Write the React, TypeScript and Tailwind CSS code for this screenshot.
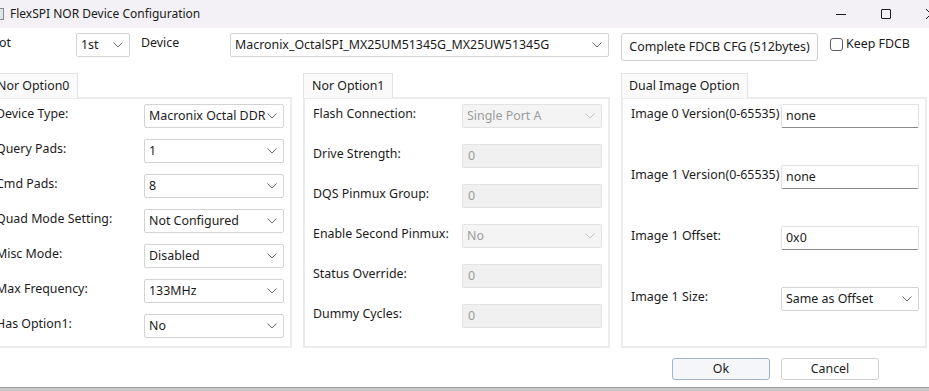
import React from "react";

const font = { fontFamily: '"Noto Sans", "Open Sans", sans-serif' };

function Chevron({ disabled }: { disabled?: boolean }) {
  return (
    <svg width="10" height="6" viewBox="0 0 10 6" className="shrink-0">
      <polyline
        points="0.5,0.5 5,5 9.5,0.5"
        fill="none"
        stroke={disabled ? "#c4c4c4" : "#6a6a6a"}
        strokeWidth="1"
      />
    </svg>
  );
}

function Combo({ value, w, disabled }: { value: string; w: string; disabled?: boolean }) {
  return (
    <div
      className={`${w} flex h-[24px] shrink-0 items-center justify-between overflow-hidden rounded-[2px] border pl-[4px] pr-[6px] ${
        disabled ? "border-[#e3e3e3] bg-[#f4f4f4] text-[#9c9c9c]" : "border-[#d3d3d3] bg-white text-[#1b1b1b]"
      }`}
    >
      <span className="min-w-0 flex-1 overflow-hidden whitespace-nowrap text-clip">{value}</span>
      <Chevron disabled={disabled} />
    </div>
  );
}

function Field({ value, disabled }: { value: string; disabled?: boolean }) {
  if (disabled) {
    return (
      <div className="flex h-[24px] w-[140px] shrink-0 items-center rounded-[2px] border border-[#e3e3e3] bg-[#f0f0f0] px-[5px] text-[#9c9c9c]">
        {value}
      </div>
    );
  }
  return (
    <div className="flex h-[24px] w-[138px] shrink-0 items-center rounded-[2px] border border-[#e2e2e2] border-b-[#8a8a8a] bg-white px-[4px] text-[#1b1b1b]">
      {value}
    </div>
  );
}

function Group({
  title,
  width,
  children,
  tabPad,
}: {
  title: string;
  width: string;
  children: React.ReactNode;
  tabPad: string;
}) {
  return (
    <div className={`${width} flex shrink-0 flex-col`}>
      <div className={`relative z-10 -mb-px flex h-[25px] items-center self-start border border-b-0 border-[#e3e3e3] bg-[#fafafa] ${tabPad} text-[#1b1b1b]`}>
        {title}
      </div>
      <div className="h-[251px] border-2 border-[#ececec] bg-white">{children}</div>
    </div>
  );
}

function Row({ label, children }: { label: string; children: React.ReactNode }) {
  return (
    <div className="flex items-start justify-between">
      <span className="mt-[1px] whitespace-nowrap">{label}</span>
      {children}
    </div>
  );
}

export default function App() {
  const opt0: [string, string][] = [
    ["Device Type:", "Macronix Octal DDR"],
    ["Query Pads:", "1"],
    ["Cmd Pads:", "8"],
    ["Quad Mode Setting:", "Not Configured"],
    ["Misc Mode:", "Disabled"],
    ["Max Frequency:", "133MHz"],
    ["Has Option1:", "No"],
  ];
  const opt1: [string, string, boolean][] = [
    ["Flash Connection:", "Single Port A", true],
    ["Drive Strength:", "0", false],
    ["DQS Pinmux Group:", "0", false],
    ["Enable Second Pinmux:", "No", true],
    ["Status Override:", "0", false],
    ["Dummy Cycles:", "0", false],
  ];

  return (
    <div style={font} className="relative h-[391px] w-[929px] overflow-hidden bg-white text-[12.4px] leading-[18px] text-[#1b1b1b]">
      {/* title bar */}
      <div className="flex h-[28px] items-center bg-[#f3f1f5]">
        <div className="ml-[-8px] h-[12px] w-[12px] border border-[#8a8a8a] bg-[#dfe6ee]" />
        <span className="ml-[6px] text-[12px] text-[#1a1a1a]">FlexSPI NOR Device Configuration</span>
        <div className="ml-auto flex items-center">
          <div className="mr-[35px] h-px w-[10px] bg-[#1a1a1a]" />
          <div className="mr-[34px] h-[10px] w-[10px] rounded-[1px] border border-[#1a1a1a]" />
          <svg width="12" height="10" viewBox="0 0 12 10" className="mr-[-8px]">
            <path d="M1 0 L11 10 M11 0 L1 10" stroke="#1a1a1a" strokeWidth="1" />
          </svg>
        </div>
      </div>

      {/* top row */}
      <div className="flex items-start pt-[5px]">
        <span className="ml-[-11px] mt-[1px] w-[87px]">Slot</span>
        <Combo value="1st" w="w-[54px]" />
        <span className="ml-[11px] mt-[1px] w-[89px]">Device</span>
        <Combo value="Macronix_OctalSPI_MX25UM51345G_MX25UW51345G" w="w-[379px]" />
        <div className="ml-[12px] flex h-[28px] w-[197px] items-center justify-center rounded-[3px] border border-[#d0d0d0] bg-[#fdfdfd]">
          Complete FDCB CFG (512bytes)
        </div>
        <div className="ml-[12px] mt-[2px] flex items-center">
          <div className="h-[13px] w-[13px] rounded-[3px] border border-[#5c5c5c] bg-white" />
          <span className="ml-[3px]">Keep FDCB</span>
        </div>
      </div>

      {/* groups */}
      <div className="ml-[-14px] mt-[12px] flex gap-[11px]">
        <Group title="Nor Option0" width="w-[306px]" tabPad="pl-[10px] pr-[8px]">
          <div className="flex flex-col gap-[11px] pl-[8px] pr-[6px] pt-[5px]">
            {opt0.map(([l, v]) => (
              <Row key={l} label={l}>
                <Combo value={v} w="w-[140px]" />
              </Row>
            ))}
          </div>
        </Group>
        <Group title="Nor Option1" width="w-[307px]" tabPad="px-[8px]">
          <div className="flex flex-col gap-[16px] pl-[8px] pr-[6px] pt-[5px]">
            {opt1.map(([l, v, combo]) => (
              <Row key={l} label={l}>
                {combo ? <Combo value={v} w="w-[140px]" disabled /> : <Field value={v} disabled />}
              </Row>
            ))}
          </div>
        </Group>
        <Group title="Dual Image Option" width="w-[306px]" tabPad="px-[7px]">
          <div className="flex flex-col gap-[37px] pl-[8px] pr-[6px] pt-[5px]">
            <Row label="Image 0 Version(0-65535)">
              <Field value="none" />
            </Row>
            <Row label="Image 1 Version(0-65535)">
              <Field value="none" />
            </Row>
            <Row label="Image 1 Offset:">
              <Field value="0x0" />
            </Row>
            <Row label="Image 1 Size:">
              <Combo value="Same as Offset" w="w-[138px]" />
            </Row>
          </div>
        </Group>
      </div>

      {/* buttons */}
      <div className="mt-[10px] flex justify-end gap-[11px] pr-[50px]">
        <div className="flex h-[22px] w-[98px] items-center justify-center rounded-[3px] border border-[#9fb3cb] bg-[#f4f6f9]">
          Ok
        </div>
        <div className="flex h-[22px] w-[98px] items-center justify-center rounded-[3px] border border-[#d0d0d0] bg-white">
          Cancel
        </div>
      </div>

      {/* bottom edge */}
      <div className="absolute bottom-0 left-0 h-[4px] w-full border-t border-[#9a9a9a] bg-[#c8c8c8]" />
    </div>
  );
}
